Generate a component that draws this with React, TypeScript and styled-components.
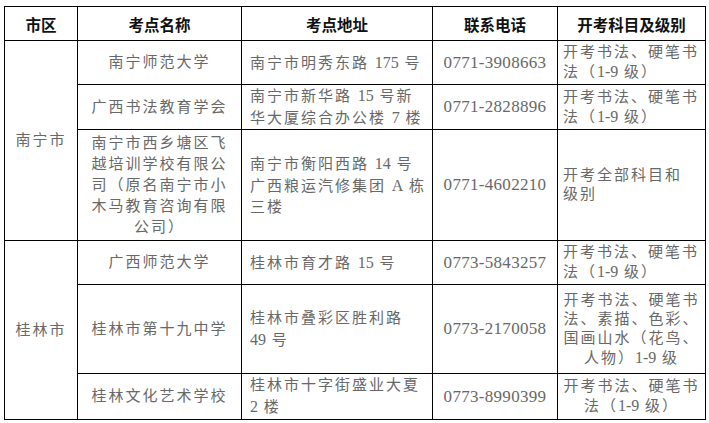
import React from "react";
import styled, { createGlobalStyle } from "styled-components";

const Global = createGlobalStyle`
  html, body { margin: 0; padding: 0; background: #fff; }
  body { width: 709px; height: 423px; overflow: hidden; }
`;

const Page = styled.div`
  padding: 6px 0 0 4px;
`;

const Table = styled.table`
  border-collapse: collapse;
  table-layout: fixed;
  width: 701px;
  font-family: "Liberation Serif", "Noto Sans CJK SC", serif;
  color: #686868;
`;

const HeadCell = styled.th`
  border: 1px solid #000;
  height: 33px;
  padding: 0;
  font-family: "Noto Sans CJK SC", sans-serif;
  font-weight: 700;
  font-size: 15.5px;
  color: #111;
  text-align: center;
  vertical-align: middle;
`;

const Row = styled.tr<{ $h: number }>`
  height: ${(p) => p.$h}px;
`;

const Cell = styled.td<{ $align?: "left" | "center"; $lh?: number; $pad?: number }>`
  border: 1px solid #000;
  padding: 0 ${(p) => p.$pad ?? 4}px;
  font-size: 15px;
  letter-spacing: 2px;
  line-height: ${(p) => p.$lh ?? 21}px;
  text-align: ${(p) => p.$align ?? "center"};
  vertical-align: middle;
  white-space: nowrap;
`;

const PhoneCell = styled.td`
  border: 1px solid #000;
  padding: 0;
  font-family: "Liberation Serif", serif;
  font-size: 17px;
  letter-spacing: 0.3px;
  text-align: center;
  vertical-align: middle;
  white-space: nowrap;
`;

const Num = styled.span`
  letter-spacing: 0;
  font-size: 16px;
`;

type R = {
  h: number;
  city?: { name: string; span: number };
  name: string[];
  addr: React.ReactNode[];
  phone: string;
  subj: React.ReactNode[];
  subjAlign: "left" | "center";
};

const rows: R[] = [
  {
    h: 44,
    city: { name: "南宁市", span: 3 },
    name: ["南宁师范大学"],
    addr: [<>南宁市明秀东路 <Num>175</Num> 号</>],
    phone: "0771-3908663",
    subj: ["开考书法、硬笔书", <>法（<Num>1-9</Num> 级）</>],
    subjAlign: "left",
  },
  {
    h: 45,
    name: ["广西书法教育学会"],
    addr: [<>南宁市新华路 <Num>15</Num> 号新</>, <>华大厦综合办公楼 <Num>7</Num> 楼</>],
    phone: "0771-2828896",
    subj: ["开考书法、硬笔书", <>法（<Num>1-9</Num> 级）</>],
    subjAlign: "left",
  },
  {
    h: 111,
    name: ["南宁市西乡塘区飞", "越培训学校有限公", "司（原名南宁市小", "木马教育咨询有限", "公司）"],
    addr: [<>南宁市衡阳西路 <Num>14</Num> 号</>, <>广西粮运汽修集团 <Num>A</Num> 栋</>, "三楼"],
    phone: "0771-4602210",
    subj: ["开考全部科目和", "级别"],
    subjAlign: "left",
  },
  {
    h: 44,
    city: { name: "桂林市", span: 3 },
    name: ["广西师范大学"],
    addr: [<>桂林市育才路 <Num>15</Num> 号</>],
    phone: "0773-5843257",
    subj: ["开考书法、硬笔书", <>法（<Num>1-9</Num> 级）</>],
    subjAlign: "left",
  },
  {
    h: 89,
    name: ["桂林市第十九中学"],
    addr: ["桂林市叠彩区胜利路", <><Num>49</Num> 号</>],
    phone: "0773-2170058",
    subj: ["开考书法、硬笔书", "法、素描、色彩、", "国画山水（花鸟、", <>人物）<Num>1-9</Num> 级</>],
    subjAlign: "center",
  },
  {
    h: 46,
    name: ["桂林文化艺术学校"],
    addr: ["桂林市十字街盛业大夏", <><Num>2</Num> 楼</>],
    phone: "0773-8990399",
    subj: ["开考书法、硬笔书", <>法（<Num>1-9</Num> 级）</>],
    subjAlign: "center",
  },
];

const Lines: React.FC<{ items: React.ReactNode[] }> = ({ items }) => (
  <>
    {items.map((it, i) => (
      <React.Fragment key={i}>
        {i > 0 && <br />}
        {it}
      </React.Fragment>
    ))}
  </>
);

export default function App() {
  return (
    <>
      <Global />
      <Page>
        <Table>
          <colgroup>
            <col style={{ width: 73 }} />
            <col style={{ width: 164 }} />
            <col style={{ width: 191 }} />
            <col style={{ width: 125 }} />
            <col style={{ width: 148 }} />
          </colgroup>
          <thead>
            <tr>
              <HeadCell>市区</HeadCell>
              <HeadCell>考点名称</HeadCell>
              <HeadCell>考点地址</HeadCell>
              <HeadCell>联系电话</HeadCell>
              <HeadCell>开考科目及级别</HeadCell>
            </tr>
          </thead>
          <tbody>
            {rows.map((r, i) => (
              <Row key={i} $h={r.h}>
                {r.city && (
                  <Cell rowSpan={r.city.span}>{r.city.name}</Cell>
                )}
                <Cell>
                  <Lines items={r.name} />
                </Cell>
                <Cell $align="left" $pad={8}>
                  <Lines items={r.addr} />
                </Cell>
                <PhoneCell>{r.phone}</PhoneCell>
                <Cell $align={r.subjAlign} $lh={19} $pad={5}>
                  <Lines items={r.subj} />
                </Cell>
              </Row>
            ))}
          </tbody>
        </Table>
      </Page>
    </>
  );
}
